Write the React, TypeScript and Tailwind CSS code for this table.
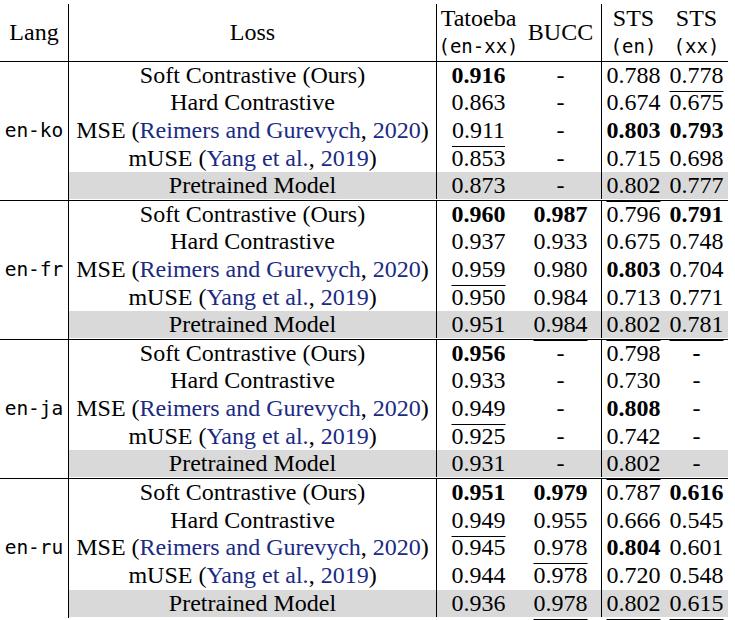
import React from "react";

type Loss = { text: string } | { name: string; cite: string; year: string };

const LOSSES: Loss[] = [
  { text: "Soft Contrastive (Ours)" },
  { text: "Hard Contrastive" },
  { name: "MSE", cite: "Reimers and Gurevych", year: "2020" },
  { name: "mUSE", cite: "Yang et al.", year: "2019" },
  { text: "Pretrained Model" },
];

// "*" = bold (best), "_" = underline (second best)
const BLOCKS: { lang: string; rows: string[][] }[] = [
  {
    lang: "en-ko",
    rows: [
      ["*0.916", "-", "0.788", "_0.778"],
      ["0.863", "-", "0.674", "0.675"],
      ["_0.911", "-", "*0.803", "*0.793"],
      ["0.853", "-", "0.715", "0.698"],
      ["0.873", "-", "_0.802", "0.777"],
    ],
  },
  {
    lang: "en-fr",
    rows: [
      ["*0.960", "*0.987", "0.796", "*0.791"],
      ["0.937", "0.933", "0.675", "0.748"],
      ["_0.959", "0.980", "*0.803", "0.704"],
      ["0.950", "_0.984", "0.713", "0.771"],
      ["0.951", "_0.984", "_0.802", "_0.781"],
    ],
  },
  {
    lang: "en-ja",
    rows: [
      ["*0.956", "-", "0.798", "*-"],
      ["0.933", "-", "0.730", "-"],
      ["_0.949", "-", "*0.808", "-"],
      ["0.925", "-", "0.742", "-"],
      ["0.931", "-", "_0.802", "-"],
    ],
  },
  {
    lang: "en-ru",
    rows: [
      ["*0.951", "*0.979", "0.787", "*0.616"],
      ["_0.949", "0.955", "0.666", "0.545"],
      ["0.945", "_0.978", "*0.804", "0.601"],
      ["0.944", "_0.978", "0.720", "0.548"],
      ["0.936", "_0.978", "_0.802", "_0.615"],
    ],
  },
];

const WIDTHS = ["w-[83px]", "w-[82px] border-r border-black", "w-[63px]", "w-[63px]"];

function Value({ raw }: { raw: string }) {
  const bold = raw.startsWith("*");
  const under = raw.startsWith("_");
  const text = bold || under ? raw.slice(1) : raw;
  return (
    <span
      className={[
        "font-['Liberation_Serif']",
        bold ? "font-bold" : "",
        under ? "underline decoration-1 underline-offset-[8px]" : "",
      ].join(" ")}
    >
      {text}
    </span>
  );
}

function LossLabel({ loss }: { loss: Loss }) {
  if ("text" in loss) return <span className="font-['Liberation_Serif']">{loss.text}</span>;
  return (
    <span className="font-['Liberation_Serif']">
      {loss.name} (<span className="text-[#1b2a84]">{loss.cite}</span>,{" "}
      <span className="text-[#1b2a84]">{loss.year}</span>)
    </span>
  );
}

function Serif({ children }: { children: React.ReactNode }) {
  return <span className="font-['Liberation_Serif']">{children}</span>;
}

function Mono({ children }: { children: React.ReactNode }) {
  return <span className="font-['DejaVu_Sans_Mono'] text-[19px]">{children}</span>;
}

export default function App() {
  return (
    <div className="h-[620px] w-[735px] overflow-hidden bg-white pt-[4px] text-[24px] text-black">
      <div className="w-[728px]">
        {/* header */}
        <div className="flex h-[57.5px] border-b-[1.5px] border-black leading-[28px]">
          <div className="flex w-[69px] items-center justify-center border-r border-black">
            <Serif>Lang</Serif>
          </div>
          <div className="flex w-[368px] items-center justify-center border-r border-black">
            <Serif>Loss</Serif>
          </div>
          <div className="flex w-[83px] flex-col items-center justify-center">
            <Serif>Tatoeba</Serif>
            <Mono>(en-xx)</Mono>
          </div>
          <div className="flex w-[82px] items-center justify-center border-r border-black">
            <Serif>BUCC</Serif>
          </div>
          <div className="flex w-[63px] flex-col items-center justify-center">
            <Serif>STS</Serif>
            <Mono>(en)</Mono>
          </div>
          <div className="flex w-[63px] flex-col items-center justify-center">
            <Serif>STS</Serif>
            <Mono>(xx)</Mono>
          </div>
        </div>

        {BLOCKS.map((block, bi) => (
          <div
            key={block.lang}
            className={[
              "flex h-[139px]",
              bi < BLOCKS.length - 1 ? "border-b-[1.5px] border-black" : "",
            ].join(" ")}
          >
            <div className="flex w-[69px] items-center justify-center border-r border-black font-['DejaVu_Sans_Mono'] text-[19.5px]">
              {block.lang}
            </div>
            <div className="flex flex-1 flex-col">
              {block.rows.map((row, ri) => (
                <div
                  key={ri}
                  className={[
                    "flex flex-1 items-center leading-[27px]",
                    ri === 4 ? "bg-[#d9d9d9]" : "",
                  ].join(" ")}
                >
                  <div className="flex h-full w-[368px] items-center justify-center border-r border-black whitespace-nowrap">
                    <LossLabel loss={LOSSES[ri]} />
                  </div>
                  {row.map((v, ci) => (
                    <div key={ci} className={`flex h-full items-center justify-center ${WIDTHS[ci]}`}>
                      <Value raw={v} />
                    </div>
                  ))}
                </div>
              ))}
            </div>
          </div>
        ))}
      </div>
    </div>
  );
}
